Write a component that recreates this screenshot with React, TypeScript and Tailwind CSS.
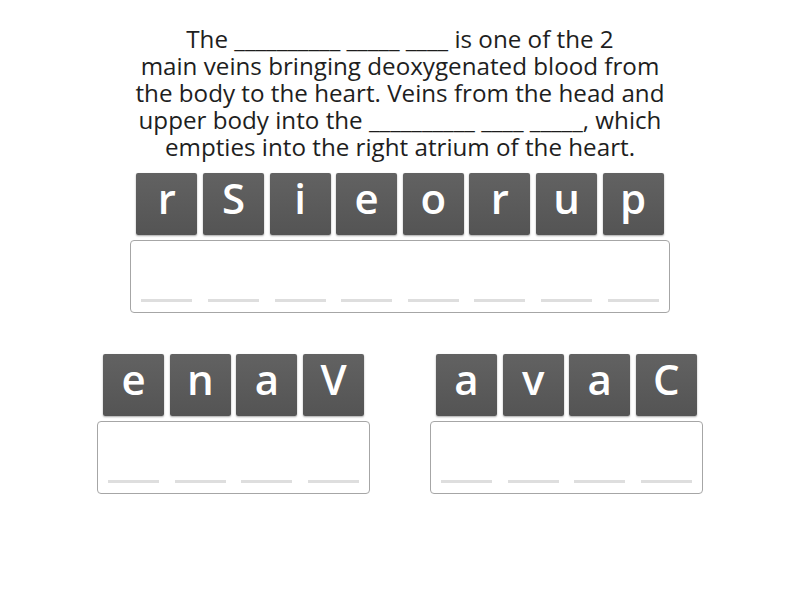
import React from 'react';

interface Group {
  letters: string[];
}

const topGroup: Group = { letters: ['r', 'S', 'i', 'e', 'o', 'r', 'u', 'p'] };
const bottomGroups: Group[] = [
  { letters: ['e', 'n', 'a', 'V'] },
  { letters: ['a', 'v', 'a', 'C'] },
];

const lines = [
  'The __________ _____ ____ is one of the 2',
  'main veins bringing deoxygenated blood from',
  'the body to the heart. Veins from the head and',
  'upper body into the __________ ____ _____, which',
  'empties into the right atrium of the heart.',
];

const Tile: React.FC<{ letter: string }> = ({ letter }) => (
  <div className="w-[61px] h-[62px] rounded-[2px] bg-gradient-to-b from-[#626262] to-[#545454] shadow-[0_1px_2px_rgba(0,0,0,0.35)] text-white text-[42px] font-semibold leading-[50px] text-center select-none">
    {letter}
  </div>
);

const Anagram: React.FC<{ group: Group }> = ({ group }) => (
  <div className="flex flex-col items-center">
    <div className="flex gap-[5.6px]">
      {group.letters.map((l, i) => (
        <Tile key={i} letter={l} />
      ))}
    </div>
    {/* answer slot with one dash per letter */}
    <div className="mt-[5px] h-[73px] border border-[#a6a6a6] rounded-[4px] px-[5px] flex items-end pb-[10px]">
      <div className="flex gap-[5.6px]">
        {group.letters.map((_, i) => (
          <div key={i} className="w-[61px] px-[5px]">
            <div className="h-[3px] bg-[#dedede]" />
          </div>
        ))}
      </div>
    </div>
  </div>
);

export default function App() {
  return (
    <div className="w-[800px] h-[600px] bg-white flex flex-col items-center pt-[25px] font-['Open_Sans',sans-serif]">
      <p className="text-[24.2px] leading-[27px] text-[#1e1e1e] text-center">
        {lines.map((line, i) => (
          <span key={i} className="block">
            {line}
          </span>
        ))}
      </p>
      <div className="mt-[13px]">
        <Anagram group={topGroup} />
      </div>
      <div className="mt-[41px] flex gap-[60px]">
        {bottomGroups.map((g, i) => (
          <Anagram key={i} group={g} />
        ))}
      </div>
    </div>
  );
}
